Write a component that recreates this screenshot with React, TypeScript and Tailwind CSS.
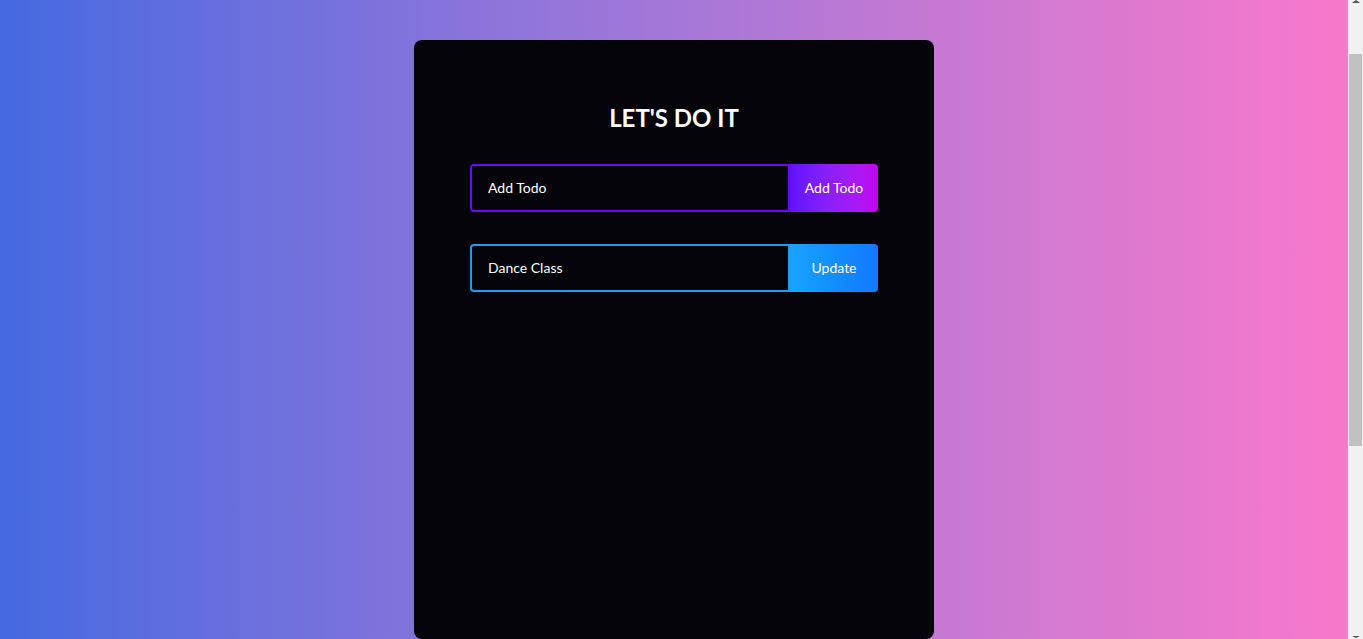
import { useState } from "react"

export default function App() {
  const [todo, setTodo] = useState("")
  const [edit, setEdit] = useState("Dance Class")

  return (
    <div className="flex h-screen w-full overflow-hidden" style={{ fontFamily: "Lato, 'Noto Sans', sans-serif" }}>
      <main className="min-w-0 flex-1 bg-gradient-to-r from-[#4369e0] to-[#f878cb] pt-10">
        <div className="mx-auto h-[599px] w-[520px] rounded-lg bg-[#04040a] px-14 pt-[62px]">
          <h1 className="text-center text-2xl font-bold text-white">LET'S DO IT</h1>

          {/* new todo */}
          <form className="mt-[30px] flex h-12" onSubmit={(e) => e.preventDefault()}>
            <input
              value={todo}
              onChange={(e) => setTodo(e.target.value)}
              placeholder="Add Todo"
              className="min-w-0 flex-1 rounded-l border-2 border-[#6a0af5] bg-transparent pl-4 text-sm text-white outline-none placeholder:text-white"
            />
            <button className="w-[88px] rounded-r bg-gradient-to-r from-[#5f12ff] to-[#c200ef] text-sm text-white">
              Add Todo
            </button>
          </form>

          {/* edit todo */}
          <form className="mt-8 flex h-12" onSubmit={(e) => e.preventDefault()}>
            <input
              value={edit}
              onChange={(e) => setEdit(e.target.value)}
              className="min-w-0 flex-1 rounded-l border-2 border-[#1b9cf2] bg-transparent pl-4 text-sm text-white outline-none"
            />
            <button className="w-[88px] rounded-r bg-gradient-to-r from-[#19a3ff] to-[#1478ff] text-sm text-white">
              Update
            </button>
          </form>
        </div>
      </main>

      {/* scrollbar */}
      <aside className="flex w-[15px] flex-col items-center bg-[#f1f1f1]">
        <div className="h-0 w-0 border-x-4 border-b-[3px] border-x-transparent border-b-[#505050]" />
        <div className="mt-[51px] h-[392px] w-[13px] bg-[#c1c1c1]" />
        <div className="mt-auto mb-[1px] h-0 w-0 border-x-4 border-t-[2px] border-x-transparent border-t-[#505050]" />
      </aside>
    </div>
  )
}
